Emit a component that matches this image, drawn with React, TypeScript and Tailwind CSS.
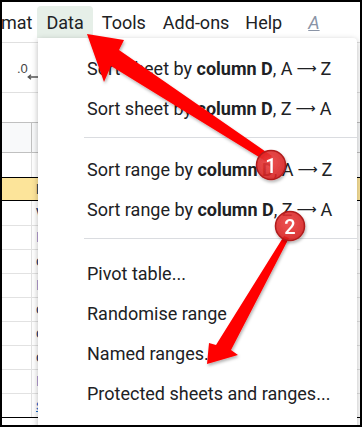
import React from 'react';

const cellRows = [
  { text: 'Wi', color: 'text-[#1c3f6e]' },
  { text: 'In', color: 'text-[#1a6fd0]' },
  { text: 'co', color: 'text-[#1c3f6e]' },
  { text: 'In', color: 'text-[#1a6fd0]' },
  { text: 'co', color: 'text-[#1c3f6e]' },
  { text: 'co', color: 'text-[#1c3f6e]' },
  { text: 'co', color: 'text-[#1c3f6e]' },
  { text: 'In', color: 'text-[#1a6fd0]' },
  { text: 'st', color: 'text-[#1a6fd0] underline' },
];

function MenuItem({ children }: { children: React.ReactNode }) {
  return (
    <div className="h-[40px] flex items-center pl-[49px] text-[18px] text-[#202124] whitespace-nowrap">
      {children}
    </div>
  );
}

function Divider({ mb }: { mb: string }) {
  return <div className={`mt-[9px] ml-[46px] h-px bg-[#dadce0] ${mb}`} />;
}

function Arrow() {
  return <span className="font-['DejaVu_Sans',sans-serif] text-[14px] mx-[4px]">⟶</span>;
}

export default function App() {
  return (
    <div className="relative w-[362px] h-[427px] overflow-hidden border-2 border-black bg-white font-['Roboto',sans-serif]">
      {/* Menu bar */}
      <div className="h-[41px] pt-[4px] border-b border-[#e0e0e0] flex text-[18px] text-[#202124] whitespace-nowrap">
        <div className="h-[32px] flex items-center -ml-[1px]">mat</div>
        <div className="h-[32px] ml-[5px] px-[9px] flex items-center bg-[#e6efe8] rounded-t-[4px]">Data</div>
        <div className="h-[32px] px-[9px] flex items-center">Tools</div>
        <div className="h-[32px] px-[8px] flex items-center">Add-ons</div>
        <div className="h-[32px] px-[8px] flex items-center">Help</div>
        <div className="h-[32px] ml-[18px] flex items-center text-[#8a94a6] italic underline">A</div>
      </div>

      {/* Sheet behind the menu */}
      <div className="h-[50px] border-b border-[#e0e0e0] pl-[15px] pt-[19px]">
        <div className="relative w-[24px] h-[20px] text-[13px] leading-[13px] text-[#444] font-['Liberation_Sans',sans-serif]">
          .0
          <svg className="absolute left-[10px] top-[12px]" width="12" height="6" viewBox="0 0 12 6">
            <path d="M11 3H1.5M4 0.8L1.2 3 4 5.2" stroke="#555" strokeWidth="1.3" fill="none" />
          </svg>
        </div>
      </div>
      <div className="h-[30px] border-b border-[#c0c0c0]" />
      <div className="h-[30px] bg-[#f8f9fa] border-b border-[#c0c0c0] flex">
        <div className="w-[30px] border-r border-[#c0c0c0]" />
      </div>
      <div className="h-[25px] border-b border-black flex">
        <div className="w-[30px] border-r border-[#e2e2e2]" />
      </div>
      <div className="h-[23px] bg-[#fce49a] border-b border-black flex items-center">
        <div className="w-[30px]" />
        <div className="pl-[4px] text-[14px] font-['Liberation_Sans',sans-serif] text-[#0b4f5c] font-bold">Na</div>
      </div>
      {cellRows.map((r, i) => (
        <div
          key={i}
          className={`${i === 0 ? 'h-[25px]' : 'h-[24px]'} flex ${i === cellRows.length - 1 ? 'border-b border-black' : 'border-b border-[#e2e2e2]'}`}
        >
          <div className="w-[30px] border-r border-[#e2e2e2]" />
          <div className={`pl-[4px] flex items-center text-[15px] font-['Liberation_Sans',sans-serif] ${r.color}`}>{r.text}</div>
        </div>
      ))}

      {/* Data dropdown */}
      <div className="absolute left-[36px] top-[36px] w-[319px] h-[400px] bg-white rounded-tr-[4px] shadow-[0_2px_6px_rgba(0,0,0,0.28)] pt-[10px]">
        <MenuItem>
          Sort sheet by&nbsp;<b className="font-bold">column D</b>, A<Arrow />Z
        </MenuItem>
        <MenuItem>
          Sort sheet by&nbsp;<b className="font-bold">column D</b>, Z<Arrow />A
        </MenuItem>
        <Divider mb="mb-[11px]" />
        <MenuItem>
          Sort range by&nbsp;<b className="font-bold">column D</b>, A<Arrow />Z
        </MenuItem>
        <MenuItem>
          Sort range by&nbsp;<b className="font-bold">column D</b>, Z<Arrow />A
        </MenuItem>
        <Divider mb="mb-[14px]" />
        <MenuItem>Pivot table...</MenuItem>
        <MenuItem>Randomise range</MenuItem>
        <MenuItem>Named ranges...</MenuItem>
        <MenuItem>Protected sheets and ranges...</MenuItem>
      </div>

      {/* Annotation arrows and badges */}
      <svg
        className="absolute -left-[2px] -top-[2px] pointer-events-none"
        width="362"
        height="427"
        viewBox="0 0 362 427"
      >
        <defs>
          <filter id="sh" x="-20%" y="-20%" width="140%" height="140%">
            <feDropShadow dx="1" dy="2" stdDeviation="1.5" floodColor="#000" floodOpacity="0.3" />
          </filter>
          <radialGradient id="badge" cx="45%" cy="40%" r="60%">
            <stop offset="0%" stopColor="#f04040" />
            <stop offset="100%" stopColor="#d81e1e" />
          </radialGradient>
        </defs>
        <polygon
          filter="url(#sh)"
          fill="#ff0000"
          points="87,34 124,40 119,50 272,156 267,162 111,66 104,82"
        />
        <polygon
          filter="url(#sh)"
          fill="#ff0000"
          points="207,364 209,343 216,345 284,236 289,238 231,350 238,355"
        />
        <g filter="url(#sh)">
          <circle cx="271" cy="165" r="14.5" fill="url(#badge)" fillOpacity="0.86" stroke="#b01c1c" strokeWidth="1.5" />
          <text x="271" y="172.5" textAnchor="middle" fontSize="20" fill="#fff" fontFamily="Roboto, sans-serif" fontWeight="500">1</text>
          <circle cx="290" cy="226" r="14.5" fill="url(#badge)" fillOpacity="0.86" stroke="#b01c1c" strokeWidth="1.5" />
          <text x="290" y="233.5" textAnchor="middle" fontSize="20" fill="#fff" fontFamily="Roboto, sans-serif" fontWeight="500">2</text>
        </g>
      </svg>
    </div>
  );
}
